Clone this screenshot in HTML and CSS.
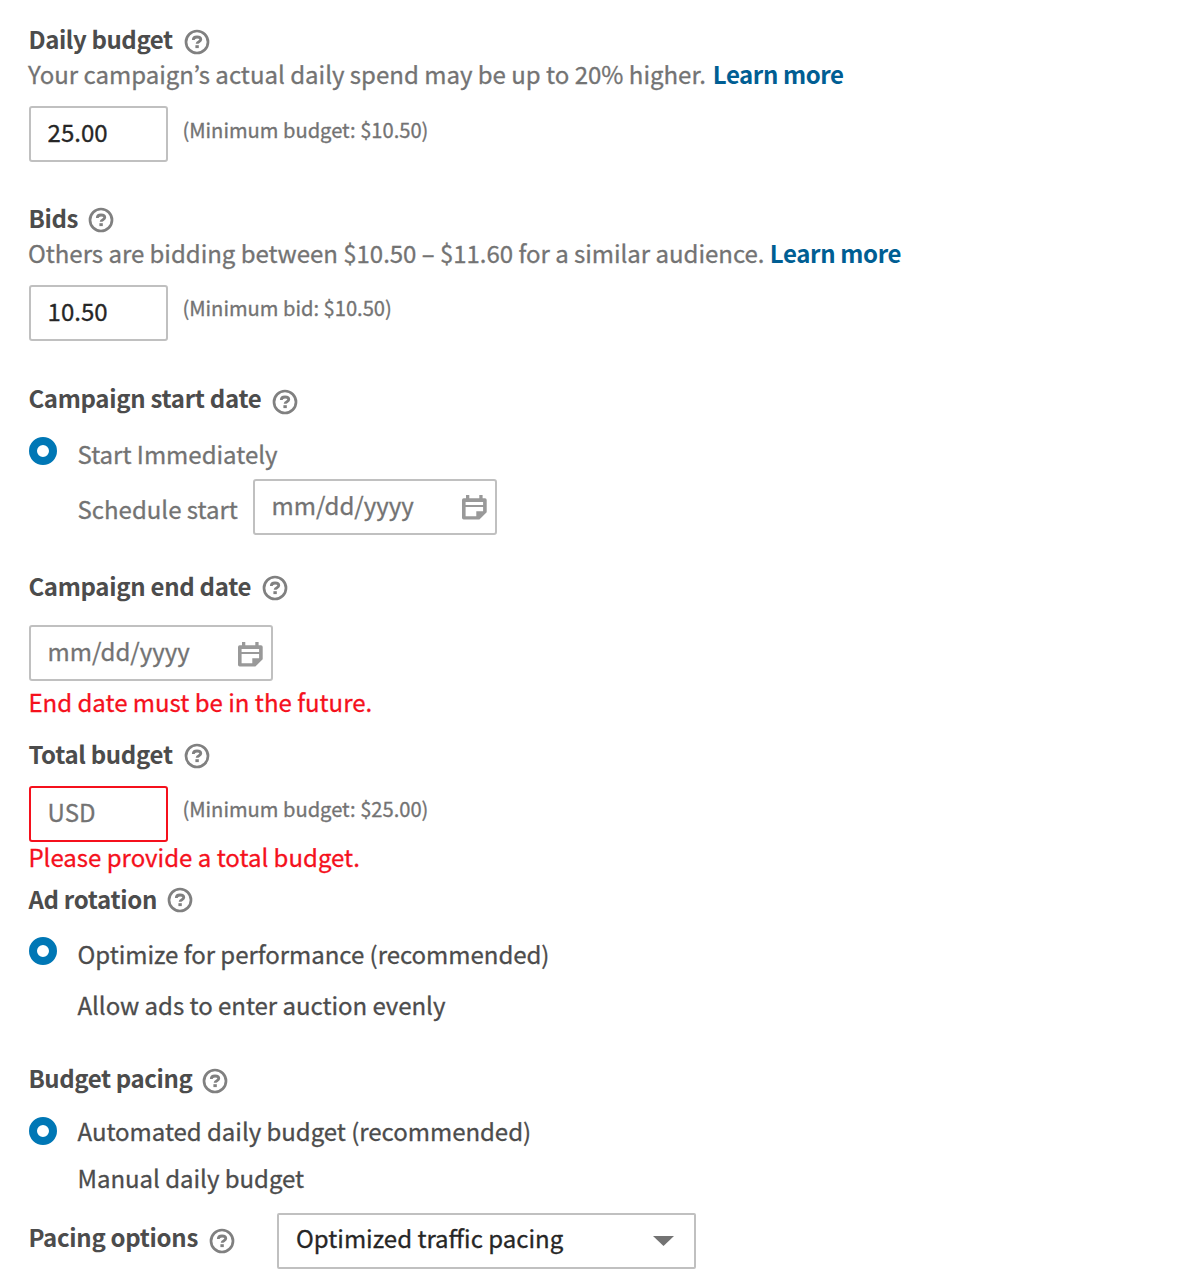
FILE: index.html
```html
<!DOCTYPE html>
<html lang="en">
<head>
<meta charset="utf-8">
<title>Campaign budget</title>
<link rel="stylesheet" href="styles.css">
</head>
<body>
<svg class="defs" aria-hidden="true">
  <symbol id="help" viewBox="0 0 26 26">
    <circle cx="13" cy="13" r="11" fill="none" stroke="currentColor" stroke-width="2.7"/>
    <path d="M9.3 11C9.300 8.900 10.700 8 13 8s3.800.9 3.800 2.600c0 2.200-3.700 1.900-3.700 4.200" fill="none" stroke="currentColor" stroke-width="2.800"/>
    <rect x="11.400" y="16.200" width="3.400" height="2.900" fill="currentColor"/>
  </symbol>
  <symbol id="calendar" viewBox="0 0 25 25">
    <path d="M4 0h3.300v3.300h10V0h3.300v3.300h2.400a1.700 1.700 0 0 1 1.700 1.700v12.300l-7.300 7.200H1.700A1.700 1.700 0 0 1 0 22.800V5a1.700 1.700 0 0 1 1.700-1.700H4zM3.600 6.900v3.100h17.500V6.900zM3.600 12v9.200h10.700v-5h6.800V12z" fill="currentColor" fill-rule="evenodd"/>
  </symbol>
</svg>
<form class="form">
  <section class="group daily">
    <h2 class="title"><span>Daily budget</span><svg class="help"><use href="#help"/></svg></h2>
    <p class="desc">Your campaign’s actual daily spend may be up to 20% higher. <a class="link">Learn more</a></p>
    <div class="row"><input class="field" type="text" value="25.00"><span class="hint">(Minimum budget: $10.50)</span></div>
  </section>

  <section class="group bids">
    <h2 class="title"><span>Bids</span><svg class="help"><use href="#help"/></svg></h2>
    <p class="desc">Others are bidding between $10.50 – $11.60 for a similar audience. <a class="link">Learn more</a></p>
    <div class="row"><input class="field" type="text" value="10.50"><span class="hint">(Minimum bid: $10.50)</span></div>
  </section>

  <section class="group start">
    <h2 class="title"><span>Campaign start date</span><svg class="help"><use href="#help"/></svg></h2>
    <div class="choice"><i class="radio"></i><span>Start Immediately</span></div>
    <div class="schedule">
      <span class="schedule-label">Schedule start</span>
      <label class="date"><input class="date-input" type="text" placeholder="mm/dd/yyyy"><svg class="calendar"><use href="#calendar"/></svg></label>
    </div>
  </section>

  <section class="group end">
    <h2 class="title"><span>Campaign end date</span><svg class="help"><use href="#help"/></svg></h2>
    <label class="date"><input class="date-input" type="text" placeholder="mm/dd/yyyy"><svg class="calendar"><use href="#calendar"/></svg></label>
    <p class="error">End date must be in the future.</p>
  </section>

  <section class="group total">
    <h2 class="title"><span>Total budget</span><svg class="help"><use href="#help"/></svg></h2>
    <div class="row"><input class="field invalid" type="text" placeholder="USD"><span class="hint">(Minimum budget: $25.00)</span></div>
    <p class="error">Please provide a total budget.</p>
  </section>

  <section class="group rotation">
    <h2 class="title"><span>Ad rotation</span><svg class="help"><use href="#help"/></svg></h2>
    <div class="choice"><i class="radio"></i><span>Optimize for performance (recommended)</span></div>
    <div class="choice other"><span>Allow ads to enter auction evenly</span></div>
  </section>

  <section class="group pacing">
    <h2 class="title"><span>Budget pacing</span><svg class="help"><use href="#help"/></svg></h2>
    <div class="choice"><i class="radio"></i><span>Automated daily budget (recommended)</span></div>
    <div class="choice other"><span>Manual daily budget</span></div>
  </section>

  <section class="group options">
    <h2 class="title"><span>Pacing options</span><svg class="help"><use href="#help"/></svg></h2>
    <div class="select"><span>Optimized traffic pacing</span><i class="arrow"></i></div>
  </section>
</form>
</body>
</html>
```
FILE: styles.css
```css
* { box-sizing: border-box; }
body {
  margin: 0;
  background: #fff;
  font-family: "Noto Sans CJK KR", "Noto Sans", sans-serif;
  font-size: 24px;
  line-height: 35px;
  color: #737373;
  -webkit-text-stroke: 0.3px currentColor;
}
.defs { position: absolute; width: 0; height: 0; }
.form { height: 1272px; padding: 21px 0 0 28px; overflow: hidden; white-space: nowrap; }
.title {
  display: flex;
  gap: 11px;
  height: 35px;
  margin: 0;
  padding-left: 0.4px;
  font-size: 24px;
  font-weight: 700;
  letter-spacing: -0.3px;
  color: #4c4c4c;
  -webkit-text-stroke: 0;
}
.help { width: 26px; height: 26px; margin-top: 8px; color: #808080; }
.daily .title, .pacing .title { letter-spacing: -0.4px; }
.bids .title, .pacing .title { gap: 10px; }
.rotation .title { gap: 10px; }
.start .help, .options .help { margin-top: 8.5px; }
.bids .help, .end .help, .total .help { margin-top: 7px; }
.rotation .help { margin-top: 6px; }
.desc, .error { margin: 0; }
.daily .link { margin-left: 1.5px; }
.link { color: #005e93; font-weight: 700; letter-spacing: -0.4px; -webkit-text-stroke: 0; }
.bids .desc { letter-spacing: -0.02px; }
.bids .link { letter-spacing: -0.35px; }
.error { padding-left: 0.4px; color: #f5101c; }

.row { display: flex; gap: 14.4px; height: 56px; margin: 15px 0 0 1px; }
.hint { margin-top: 9px; font-size: 20.15px; line-height: 29px; }
.bids .hint, .total .hint { margin-top: 8px; }
input { font: inherit; color: #262626; outline: 0; -webkit-text-stroke: inherit; }
input::placeholder { color: #737373; opacity: 1; -webkit-text-stroke: 0.3px #737373; }
.field {
  width: 139px;
  height: 56px;
  padding: 6px 16.6px 11px;
  border: 2px solid #c0c0c0;
  border-radius: 3px;
}
.field.invalid { border-color: #f5101c; }

.bids { margin-top: 38px; }
.start { margin-top: 39px; }
.end { margin-top: 34px; }
.total { margin-top: 17px; }
.rotation { margin-top: 7px; }
.pacing { margin-top: 38px; }

.choice { display: flex; gap: 20.9px; height: 35px; padding-left: 0.6px; }
.radio {
  width: 28px;
  height: 28px;
  margin-top: 1px;
  border: 8px solid #0077b5;
  border-radius: 50%;
}
.choice.other { padding-left: 49.5px; }
.start .choice { margin-top: 21px; }
.rotation, .pacing { color: #4c4c4c; }
.rotation .choice, .pacing .choice { letter-spacing: -0.03px; }
.rotation .choice { margin-top: 20px; }
.rotation .other { margin-top: 16px; }
.pacing .choice { margin-top: 18px; }
.pacing .other { margin-top: 12px; }
.pacing .radio { margin-top: 4px; }

.schedule { display: flex; gap: 15px; margin-top: 8px; padding-left: 49.5px; }
.schedule-label { width: 160.5px; margin-top: 12px; }
.date {
  display: flex;
  width: 244px;
  height: 56px;
  padding: 6px 8.5px 0 16.6px;
  border: 2px solid #c0c0c0;
  border-radius: 3px;
}
.schedule .date { height: 56px; margin: -0.5px 0 -0.5px; }
.date-input { flex: 1; min-width: 0; height: 35px; padding: 0; border: 0; background: none; }
.calendar { width: 25px; height: 25px; margin-top: 8.5px; color: #999; }
.end .date { margin: 22px 0 0 1px; }
.end .error { margin-top: 3px; }
.total .error { margin-top: -3px; }

.options { display: flex; justify-content: space-between; width: 668px; margin-top: 18px; }
.options .title { margin-top: 6px; }
.select {
  display: flex;
  justify-content: space-between;
  width: 419px;
  height: 56px;
  padding: 5px 20px 0 17px;
  border: 2px solid #c0c0c0;
  border-radius: 2px;
  color: #262626;
}
.arrow {
  width: 21px;
  height: 10px;
  margin-top: 16px;
  background: #737373;
  clip-path: polygon(0 0, 100% 0, 50% 100%);
}
```
